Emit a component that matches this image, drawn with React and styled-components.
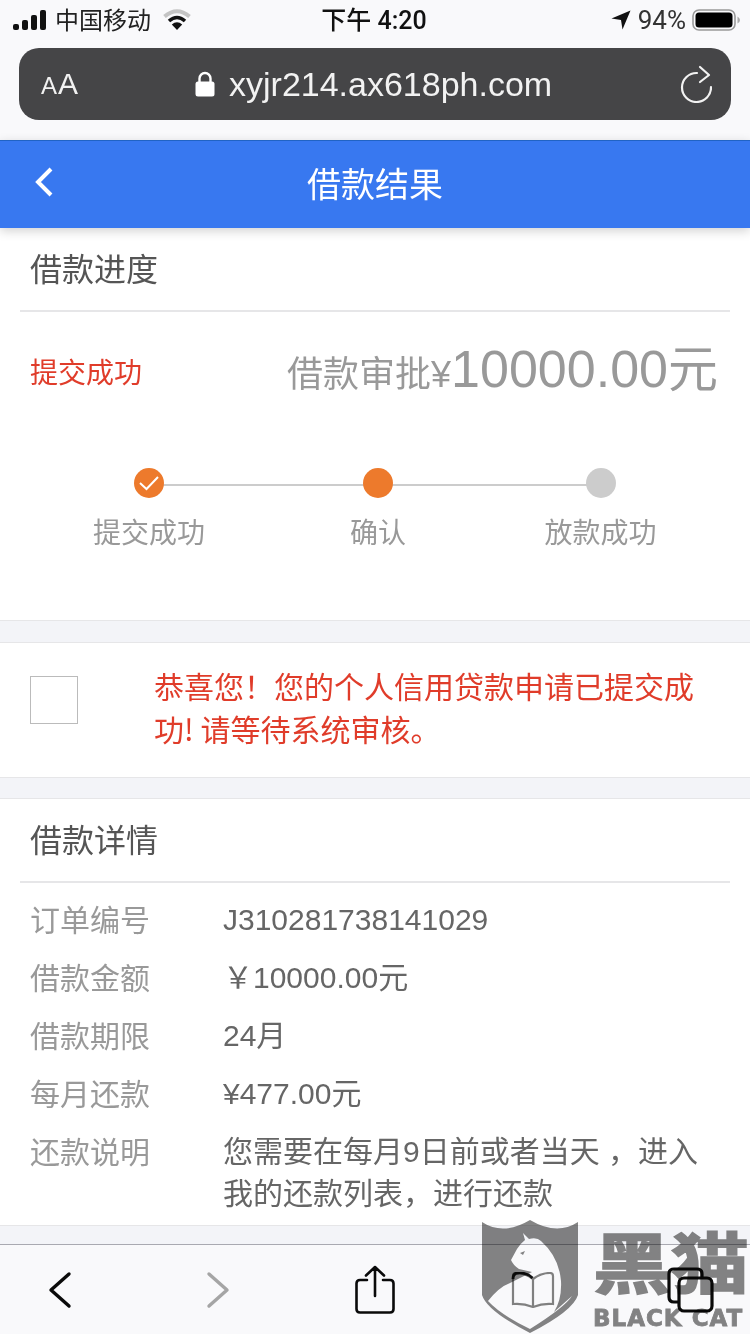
import React from 'react'
import styled, {createGlobalStyle} from 'styled-components'

const GlobalStyle = createGlobalStyle`
    html, body{
        margin: 0;
        padding: 0;
        background: #fff;
    }
    body{
        font-family: "Noto Sans CJK SC", sans-serif;
    }
`

const details = [
    {label: '订单编号', value: 'J310281738141029'},
    {label: '借款金额', value: '￥10000.00元'},
    {label: '借款期限', value: '24月'},
    {label: '每月还款', value: '¥477.00元'},
    {label: '还款说明', value: '您需要在每月9日前或者当天 ，进入我的还款列表，进行还款'},
]

const steps = [
    {label: '提交成功', state: 'done'},
    {label: '确认', state: 'active'},
    {label: '放款成功', state: 'todo'},
]

export default function App() {
    return (
        <Page>
            <GlobalStyle />
            <Chrome>
                <StatusBar>
                    <StatusSide>
                        <svg width="33" height="20" viewBox="0 0 33 20" fill="#111">
                            <rect x="0" y="14" width="6" height="6" rx="2" />
                            <rect x="9" y="10" width="6" height="10" rx="2" />
                            <rect x="18" y="5" width="6" height="15" rx="2" />
                            <rect x="27" y="0" width="6" height="20" rx="2" />
                        </svg>
                        <Carrier>中国移动</Carrier>
                        <svg width="28" height="22" viewBox="0 0 28 22" fill="none">
                            <path d="M1.5 7.5 Q14 -3 26.5 7.5" stroke="#c4c4c4" strokeWidth="4" />
                            <path d="M6 12 Q14 5 22 12" stroke="#111" strokeWidth="3.6" />
                            <path d="M14 21 L8.8 15.4 Q14 11 19.2 15.4 Z" fill="#111" />
                        </svg>
                    </StatusSide>
                    <Clock>下午 4:20</Clock>
                    <StatusSide $right>
                        <svg width="20" height="20" viewBox="0 0 20 20" fill="#111">
                            <path d="M19.5 .5 L.5 8.5 L10 10 L11.5 19.5 Z" />
                        </svg>
                        <Battery>94%</Battery>
                        <svg width="49" height="22" viewBox="0 0 49 22">
                            <rect x="1" y="1" width="42" height="20" rx="6" fill="none" stroke="#999" strokeWidth="1.6" />
                            <rect x="3.5" y="3.5" width="37" height="15" rx="3.5" fill="#000" />
                            <path d="M45.5 7.5 Q48 9 48 11 Q48 13 45.5 14.5 Z" fill="#aaa" />
                        </svg>
                    </StatusSide>
                </StatusBar>
                <UrlBar>
                    <TextSize>
                        <small>A</small>A
                    </TextSize>
                    <Address>
                        <svg width="20" height="26" viewBox="0 0 20 26" fill="#fff">
                            <path d="M4.5 11 V7.5 a5.5 5.5 0 0 1 11 0 V11" fill="none" stroke="#fff" strokeWidth="2.4" />
                            <rect x="0.5" y="10.5" width="19" height="15" rx="2.5" />
                        </svg>
                        <span>xyjr214.ax618ph.com</span>
                    </Address>
                    <svg width="32" height="38" viewBox="0 0 32 38" fill="none" stroke="#f2f2f2" strokeWidth="2.2" strokeLinecap="round" strokeLinejoin="round">
                        <path d="M17 8 A14.5 14.5 0 1 0 31 22" />
                        <path d="M20 2 L29 10 L20 17" />
                    </svg>
                </UrlBar>
            </Chrome>

            <Header>
                <BackButton>
                    <svg width="20" height="30" viewBox="0 0 20 30" fill="none" stroke="#fff" strokeWidth="4">
                        <path d="M17 2 L4 15 L17 28" />
                    </svg>
                </BackButton>
                借款结果
            </Header>

            <ProgressSection>
                <SectionTitle>借款进度</SectionTitle>
                <Summary>
                    <SubmittedText>提交成功</SubmittedText>
                    <Approval>
                        借款审批¥<Amount>10000.00</Amount><BigUnit>元</BigUnit>
                    </Approval>
                </Summary>
                <Stepper>
                    <Track />
                    {steps.map(step => (
                        <Step key={step.label}>
                            <Dot $state={step.state}>
                                {step.state === 'done' && (
                                    <svg width="22" height="16" viewBox="0 0 22 16" fill="none" stroke="#fff" strokeWidth="2">
                                        <path d="M2 8 L8.5 14 L20 2" />
                                    </svg>
                                )}
                            </Dot>
                            <StepLabel>{step.label}</StepLabel>
                        </Step>
                    ))}
                </Stepper>
            </ProgressSection>

            <Gap $wide />

            <NoticeCard>
                <BrokenImage />
                <NoticeText>恭喜您！您的个人信用贷款申请已提交成功! 请等待系统审核。</NoticeText>
            </NoticeCard>

            <Gap />

            <DetailSection>
                <SectionTitle>借款详情</SectionTitle>
                <DetailList>
                    {details.map(row => (
                        <DetailRow key={row.label}>
                            <DetailLabel>{row.label}</DetailLabel>
                            <DetailValue>{row.value}</DetailValue>
                        </DetailRow>
                    ))}
                </DetailList>
            </DetailSection>

            <BottomGap />

            <Toolbar>
                <ToolSlot>
                    <svg width="24" height="38" viewBox="0 0 24 38" fill="none" stroke="#0a0a0a" strokeWidth="3.4" strokeLinecap="round" strokeLinejoin="round">
                        <path d="M21 3 L3 19 L21 35" />
                    </svg>
                </ToolSlot>
                <ToolSlot>
                    <svg width="24" height="38" viewBox="0 0 24 38" fill="none" stroke="#a5a5a5" strokeWidth="3.4" strokeLinecap="round" strokeLinejoin="round">
                        <path d="M3 3 L21 19 L3 35" />
                    </svg>
                </ToolSlot>
                <ToolSlot>
                    <svg width="40" height="50" viewBox="0 0 40 50" fill="none" stroke="#0a0a0a" strokeWidth="2.6" strokeLinecap="round" strokeLinejoin="round">
                        <path d="M12 15 H5 Q1.5 15 1.5 18.5 V44 Q1.5 47.5 5 47.5 H35 Q38.5 47.5 38.5 44 V18.5 Q38.5 15 35 15 H28" />
                        <path d="M20 31 V2 M11 10.5 L20 2 L29 10.5" />
                    </svg>
                </ToolSlot>
                <ToolSlot>
                    <svg width="44" height="36" viewBox="0 0 44 36" fill="none" stroke="#808080" strokeWidth="2.2">
                        <path d="M22 7 Q14 1 5 1 Q2 1 2 4 L2 32 Q12 31 22 35 Q32 31 42 32 L42 4 Q42 1 39 1 Q30 1 22 7 L22 35" />
                        <path d="M2 7 Q2 1 7 1 Q16 .5 21.5 6" stroke="#111" strokeWidth="2.8" />
                    </svg>
                </ToolSlot>
                <ToolSlot>
                    <svg width="47" height="46" viewBox="0 0 47 46" fill="none" stroke="#0a0a0a" strokeWidth="3.2" strokeLinejoin="round">
                        <path d="M11 35 H7 Q2 35 2 30 V7 Q2 2 7 2 H30 Q35 2 35 7 V11" />
                        <rect x="12" y="11" width="33" height="33" rx="5" />
                    </svg>
                </ToolSlot>
            </Toolbar>

            <Watermark>
                <svg width="110" height="119" viewBox="0 0 110 119">
                    <path
                        fillRule="evenodd"
                        fill="#858585"
                        d="M7 7 Q28 21 55 5 Q82 21 103 7 L103 80 Q98 96 55 118 Q12 96 7 80 Z
                           M48 18 L54 24 Q62 22 66 26 Q84 42 86 66 Q87 84 79 97 L97 81 Q90 92 55 114 Q26 100 13 86 Q24 72 35 68 Q47 62 57 57 L44 54 Q38 50 36 45 L42 34 Q46 28 50 25 Z"
                    />
                    <path d="M45 38 L50 36 L48 40 Z" fill="#858585" />
                </svg>
                <BrandText>
                    <BrandName>黑猫</BrandName>
                    <BrandLatin>BLACK CAT</BrandLatin>
                </BrandText>
            </Watermark>
        </Page>
    )
}

const Page = styled.div`
    position: relative;
    width: 750px;
    height: 1334px;
    overflow: hidden;
    background: #fff;
    display: flex;
    flex-direction: column;
`
const Chrome = styled.div`
    height: 140px;
    background: #f9f9fb;
    box-sizing: border-box;
`
const StatusBar = styled.div`
    height: 48px;
    padding: 0 9px 8px 13px;
    box-sizing: border-box;
    display: grid;
    grid-template-columns: 1fr auto 1fr;
    align-items: center;
    color: #111;
`
const StatusSide = styled.div`
    display: flex;
    align-items: center;
    justify-content: ${props => props.$right ? 'flex-end' : 'flex-start'};
    gap: ${props => props.$right ? '7px' : '9px'};
`
const Carrier = styled.span`
    font-size: 24px;
    line-height: 30px;
    margin: -2px 3px 0 0;
    color: #222;
`
const Clock = styled.span`
    font-family: Roboto, "Noto Sans CJK SC", sans-serif;
    font-size: 25px;
    line-height: 30px;
    font-weight: 500;
    margin: 2px 6px 0 0;
`
const Battery = styled.span`
    font-family: Roboto, sans-serif;
    font-size: 26px;
    line-height: 30px;
    color: #333;
    margin-right: -1px;
`
const UrlBar = styled.div`
    margin: 0 19px;
    height: 72px;
    padding: 0 19px 0 22px;
    box-sizing: border-box;
    background: #454547;
    border-radius: 20px;
    display: flex;
    align-items: center;
    color: #f2f2f2;
`
const TextSize = styled.div`
    font-family: "Liberation Sans", sans-serif;
    font-size: 30px;
    width: 154px;
    small{
        font-size: 24px;
        margin-right: 1px;
    }
`
const Address = styled.div`
    flex: 1;
    display: flex;
    align-items: center;
    gap: 14px;
    font-family: "Liberation Sans", sans-serif;
    font-size: 34px;
`
const Header = styled.div`
    position: relative;
    z-index: 2;
    height: 88px;
    box-sizing: border-box;
    background: #3878f0;
    border-top: 1px solid #2163c4;
    box-shadow: 0 3px 10px rgba(0,0,0,.18);
    color: #fff;
    font-size: 34px;
    display: flex;
    align-items: center;
    justify-content: center;
    padding-bottom: 5px;
`
const BackButton = styled.div`
    position: absolute;
    left: 34px;
    top: 26px;
    line-height: 0;
`
const ProgressSection = styled.section`
    height: 392px;
    display: flex;
    flex-direction: column;
    background: #fff;
`
const SectionTitle = styled.h2`
    margin: 0 20px;
    padding: 0 0 4px 10px;
    height: 84px;
    box-sizing: border-box;
    border-bottom: 2px solid #e6e6e8;
    display: flex;
    align-items: center;
    font-size: 32px;
    font-weight: 400;
    color: #555;
`
const Summary = styled.div`
    height: 118px;
    padding: 0 32px 0 30px;
    display: flex;
    justify-content: space-between;
    align-items: center;
`
const SubmittedText = styled.span`
    font-size: 28px;
    color: #e03c2a;
`
const Approval = styled.div`
    display: flex;
    align-items: baseline;
    font-family: "Liberation Sans", "Noto Sans CJK SC", sans-serif;
    font-size: 36px;
    line-height: 60px;
    color: #999;
    margin-top: 2px;
`
const Amount = styled.span`
    font-size: 52px;
`
const BigUnit = styled.span`
    font-size: 50px;
`
const Stepper = styled.div`
    position: relative;
    display: grid;
    grid-template-columns: 229px 222.5px 112px;
    padding: 38px 0 0 93px;
`
const Track = styled.div`
    position: absolute;
    left: 149px;
    width: 451px;
    top: 54px;
    height: 2px;
    background: #ccc;
`
const Step = styled.div`
    position: relative;
    width: 112px;
    display: flex;
    flex-direction: column;
    align-items: center;
    gap: 13px;
`
const Dot = styled.div`
    width: 30px;
    height: 30px;
    border-radius: 50%;
    background: ${props => props.$state === 'todo' ? '#cccccc' : '#ed7a2c'};
    display: flex;
    align-items: center;
    justify-content: center;
`
const StepLabel = styled.div`
    font-size: 28px;
    line-height: 40px;
    color: #999;
    white-space: nowrap;
`
const Gap = styled.div`
    height: ${props => props.$wide ? '21px' : '20px'};
    background: #f3f4f8;
    border-top: 1px solid #e6e6e8;
    border-bottom: 1px solid #e6e6e8;
`
const BottomGap = styled(Gap)`
    height: 18px;
    border-bottom: 1px solid #a9a9b1;
`
const NoticeCard = styled.section`
    height: 134px;
    box-sizing: border-box;
    padding: 0 50px 0 30px;
    display: flex;
    align-items: center;
    background: #fff;
`
const BrokenImage = styled.div`
    width: 48px;
    height: 48px;
    box-sizing: border-box;
    border: 1px solid #bbb;
    flex: none;
    margin: -20px 76px 0 0;
`
const NoticeText = styled.p`
    margin: -6px 0 0;
    font-size: 30px;
    line-height: 43px;
    color: #e03c2a;
`
const DetailSection = styled.section`
    height: 426px;
    background: #fff;
`
const DetailList = styled.div`
    padding: 7px 30px 0 30px;
`
const DetailRow = styled.div`
    display: flex;
    padding: 8px 0;
    font-size: 30px;
    line-height: 42px;
`
const DetailLabel = styled.div`
    width: 193px;
    flex: none;
    margin: -1px 0 1px;
    color: #999;
`
const DetailValue = styled.div`
    max-width: 480px;
    margin: 1px 0 -1px;
    color: #666;
    font-family: "Liberation Sans", "Noto Sans CJK SC", sans-serif;
`
const Toolbar = styled.div`
    flex: 1;
    background: #f9f9fb;
    padding: 0 15px;
    display: flex;
    justify-content: space-between;
    align-items: center;
`
const ToolSlot = styled.div`
    width: 90px;
    display: flex;
    justify-content: center;
`
const Watermark = styled.div`
    position: absolute;
    right: 0;
    bottom: 0;
    width: 275px;
    height: 119px;
    display: flex;
    mix-blend-mode: multiply;
    pointer-events: none;
`
const BrandText = styled.div`
    margin-left: 8px;
    color: #858585;
    display: flex;
    flex-direction: column;
`
const BrandName = styled.div`
    font-family: "Noto Sans CJK SC", sans-serif;
    font-weight: 700;
    font-size: 78px;
    line-height: 88px;
    white-space: nowrap;
    -webkit-text-stroke: 2px #858585;
    transform: scaleY(.85);
    transform-origin: center;
`
const BrandLatin = styled.div`
    font-family: "DejaVu Sans", sans-serif;
    font-weight: 700;
    font-size: 23px;
    line-height: 26px;
    letter-spacing: 1px;
    margin-top: 2px;
    white-space: nowrap;
    -webkit-text-stroke: .8px #858585;
`
